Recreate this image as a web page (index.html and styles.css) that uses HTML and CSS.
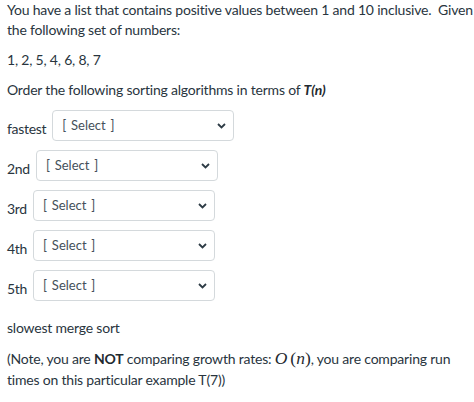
FILE: index.html
```html
<!DOCTYPE html>
<html>
<head>
<meta charset="utf-8">
<link rel="stylesheet" href="styles.css">
</head>
<body>
<div class="question">
  <p class="para">You have a list that contains positive values between 1 and 10 inclusive.&nbsp; Given the following set of numbers:</p>
  <p class="para">1, 2, 5, 4, 6, 8, 7</p>
  <p class="para">Order the following sorting algorithms in terms of <strong><em>T(n)</em></strong></p>
  <div class="rows">
    <div class="row">
      <span class="label">fastest</span>
      <div class="select"><span class="select-text">[ Select ]</span><svg class="chev" width="9" height="6" viewBox="0 0 9 6"><polyline points="1,1 4.5,4.5 8,1" fill="none" stroke="#2d3b45" stroke-width="1.8"/></svg></div>
    </div>
    <div class="row">
      <span class="label">2nd</span>
      <div class="select"><span class="select-text">[ Select ]</span><svg class="chev" width="9" height="6" viewBox="0 0 9 6"><polyline points="1,1 4.5,4.5 8,1" fill="none" stroke="#2d3b45" stroke-width="1.8"/></svg></div>
    </div>
    <div class="row">
      <span class="label">3rd</span>
      <div class="select"><span class="select-text">[ Select ]</span><svg class="chev" width="9" height="6" viewBox="0 0 9 6"><polyline points="1,1 4.5,4.5 8,1" fill="none" stroke="#2d3b45" stroke-width="1.8"/></svg></div>
    </div>
    <div class="row">
      <span class="label">4th</span>
      <div class="select"><span class="select-text">[ Select ]</span><svg class="chev" width="9" height="6" viewBox="0 0 9 6"><polyline points="1,1 4.5,4.5 8,1" fill="none" stroke="#2d3b45" stroke-width="1.8"/></svg></div>
    </div>
    <div class="row">
      <span class="label">5th</span>
      <div class="select"><span class="select-text">[ Select ]</span><svg class="chev" width="9" height="6" viewBox="0 0 9 6"><polyline points="1,1 4.5,4.5 8,1" fill="none" stroke="#2d3b45" stroke-width="1.8"/></svg></div>
    </div>
  </div>
  <p class="para slowest">slowest merge sort</p>
  <p class="para note"><span>(Note, you are </span><strong>NOT</strong><span> comparing growth rates: </span><span class="math">O</span><span class="math-up paren">(</span><span class="math">n</span><span class="math-up">)</span><span>, you are comparing run</span><br><span>times on this particular example T(7))</span></p>
</div>
</body>
</html>
```
FILE: styles.css
```css
html, body {
  margin: 0;
  padding: 0;
  background: #ffffff;
}
body {
  font-family: Lato, "Open Sans", sans-serif;
  font-size: 14px;
  letter-spacing: -0.2px;
  line-height: 20px;
  color: #29353e;
}
.question {
  padding: 0 0 0 7px;
}
.para {
  margin: 0 0 10px 0;
}
.para strong {
  font-weight: 700;
  color: #1f2a30;
}
.rows {
  display: flex;
  flex-direction: column;
  gap: 9px;
  margin-top: 9px;
}
.row {
  display: flex;
  align-items: center;
  gap: 6px;
}
.label {
  font-size: 14px;
  letter-spacing: -0.3px;
  padding-top: 7px;
}
.select {
  box-sizing: border-box;
  width: 182px;
  height: 31px;
  border: 1px solid #d4d9dc;
  border-radius: 4px;
  display: flex;
  align-items: center;
  justify-content: space-between;
  padding: 0 7px 0 9px;
}
.select-text {
  color: #45505a;
  font-size: 13px;
  letter-spacing: 0;
  word-spacing: 1.5px;
  margin-top: -1px;
}
.chev {
  display: block;
}
.slowest {
  margin-top: 17px;
}
.note {
  line-height: 21px;
}
.math {
  font-family: "Liberation Serif", "DejaVu Serif", serif;
  font-style: italic;
  font-size: 17.5px;
  letter-spacing: 0;
  line-height: 1;
  color: #1f2a30;
}
.math-up {
  font-family: "Liberation Serif", "DejaVu Serif", serif;
  font-size: 17.5px;
  letter-spacing: 0;
  line-height: 1;
  color: #1f2a30;
}
.paren {
  margin-left: 3px;
}
```
